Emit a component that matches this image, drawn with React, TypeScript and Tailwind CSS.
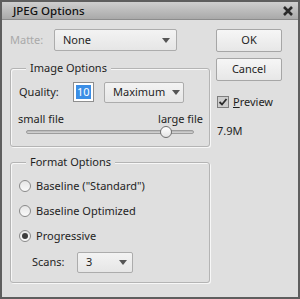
import React from "react";

const Arrow = () => (
  <svg width="8" height="5" viewBox="0 0 8 5" className="shrink-0">
    <path d="M0 0h8L4 5z" fill="#555" />
  </svg>
);

const Select = ({ value, className }: { value: string; className: string }) => (
  <div
    className={`flex items-center justify-between rounded-[2px] border border-[#acacac] bg-gradient-to-b from-[#f3f3f3] to-[#e6e6e6] pl-[8px] ${className}`}
  >
    <span>{value}</span>
    <Arrow />
  </div>
);

const Group = ({ title, className, children }: { title: string; className: string; children: React.ReactNode }) => (
  <div
    className={`flex flex-col rounded-[3px] border border-[#b4b4b4] shadow-[inset_1px_1px_0_#f7f7f7,1px_1px_0_#f7f7f7] ${className}`}
  >
    <span className="-mt-[9px] ml-[15px] self-start bg-[#dfdfdf] px-[4px] leading-[16px]">{title}</span>
    {children}
  </div>
);

const Radio = ({ label, checked }: { label: string; checked?: boolean }) => (
  <div className="flex h-[20px] items-center">
    <span className="ml-[8px] flex h-[12px] w-[12px] items-center justify-center rounded-full border border-[#8a8a8a] bg-gradient-to-b from-[#e6e6e6] to-[#fafafa]">
      {checked && <span className="h-[6px] w-[6px] rounded-full bg-[#3c3c3c]" />}
    </span>
    <span className="ml-[5px]">{label}</span>
  </div>
);

const Button = ({ label, className }: { label: string; className?: string }) => (
  <div
    className={`flex h-[23px] w-[66px] items-center justify-center rounded-[2px] border border-[#a6a6a6] bg-gradient-to-b from-[#f6f6f6] to-[#e7e7e7] ${className ?? ""}`}
  >
    {label}
  </div>
);

export default function App() {
  return (
    <div className="flex h-[299px] w-[300px] flex-col border-2 border-[#5e5e5e] bg-[#dfdfdf] font-['Noto_Sans',sans-serif] text-[11px] text-[#1e1e1e]">
      <div className="flex h-[18px] shrink-0 items-center justify-between border-b border-[#8c8c8c] bg-gradient-to-b from-[#cfcfcf] to-[#a9a9a9] pl-[11px] pr-[5px]">
        <span className="text-[11.5px] font-medium text-[#111]">JPEG Options</span>
        <svg width="10" height="10" viewBox="0 0 10 10">
          <path d="M1 1l8 8M9 1l-8 8" stroke="#2a2a2a" strokeWidth="2.6" />
        </svg>
      </div>

      <div className="flex">
        <div className="flex w-[200px] flex-col pl-[8px]">
          <div className="mt-[9px] flex h-[22px] items-center">
            <span className="w-[44px] text-[#a9a9a9]">Matte:</span>
            <Select value="None" className="h-[22px] w-[123px] pr-[6px]" />
          </div>

          <Group title="Image Options" className="mt-[17px] h-[79px] w-[200px]">
            <div className="mt-[6px] flex h-[20px] items-center pl-[8px]">
              <span className="w-[54px]">Quality:</span>
              <div className="flex h-[20px] w-[21px] items-center border border-[#8f8f8f] bg-white pl-[2px]">
                <span className="bg-[#3b8ee6] px-[1px] leading-[14px] text-white">10</span>
              </div>
              <Select value="Maximum" className="ml-[10px] h-[21px] w-[80px] pr-[3px]" />
            </div>
            <div className="mt-[10px] flex justify-between pl-[7px] pr-[6px] leading-[14px]">
              <span>small file</span>
              <span>large file</span>
            </div>
            <div className="relative ml-[15px] flex h-[12px] w-[168px] items-center">
              <div className="h-[4px] w-full rounded-full border border-[#9c9c9c] bg-gradient-to-b from-[#b4b4b4] to-[#d6d6d6]" />
              <div className="absolute left-[134px] top-0 h-[12px] w-[12px] rounded-full border border-[#6f6f6f] bg-gradient-to-b from-[#ffffff] to-[#e4e4e4]" />
            </div>
          </Group>

          <Group title="Format Options" className="mt-[15px] h-[121px] w-[200px]">
            <div className="mt-[6px] flex flex-col gap-[5px]">
              <Radio label={'Baseline ("Standard")'} />
              <Radio label="Baseline Optimized" />
              <Radio label="Progressive" checked />
            </div>
            <div className="mt-[6px] flex h-[21px] items-center pl-[21px]">
              <span className="w-[45px]">Scans:</span>
              <Select value="3" className="h-[21px] w-[56px] pr-[5px]" />
            </div>
          </Group>
        </div>

        <div className="ml-[14px] flex flex-col">
          <Button label="OK" className="mt-[9px]" />
          <Button label="Cancel" className="mt-[6px]" />
          <div className="mt-[14px] flex h-[14px] items-center">
            <span className="ml-[1px] flex h-[12px] w-[12px] items-center justify-center border border-[#7d7d7d] bg-[#cdcdcd]">
              <svg width="10" height="10" viewBox="0 0 10 10">
                <path d="M1.5 5l2.5 2.5L8.5 2" stroke="#2b2b2b" strokeWidth="1.8" fill="none" />
              </svg>
            </span>
            <span className="ml-[4px]">
              <span className="underline">P</span>review
            </span>
          </div>
          <span className="mt-[14px] ml-[1px] leading-[16px]">7.9M</span>
        </div>
      </div>
    </div>
  );
}
